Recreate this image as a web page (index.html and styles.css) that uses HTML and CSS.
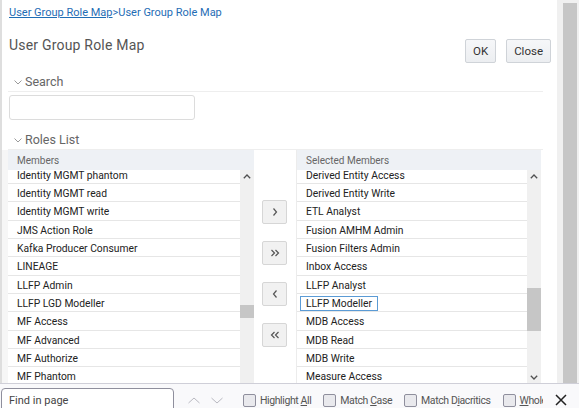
FILE: index.html
```html
<!DOCTYPE html>
<html lang="en">
<head>
    <meta charset="UTF-8">
    <meta name="viewport" content="width=device-width, initial-scale=1.0">
    <title>User Group Role Map</title>
    <link rel="stylesheet" href="styles.css">
</head>
<body>

<div class="window">
    <div class="content">
        <div class="crumbs"><a href="#">User Group Role Map</a>&gt;<span>User Group Role Map</span></div>

        <div class="header">
            <h1 class="title">User Group Role Map</h1>
            <div class="actions">
                <button class="btn">OK</button>
                <button class="btn">Close</button>
            </div>
        </div>

        <div class="section-head">
            <svg class="caret" width="8" height="5" viewBox="0 0 8 5"><polyline points="0.5,0.5 4,4 7.5,0.5"/></svg>
            Search
        </div>
        <input class="search-input" type="text">

        <div class="section-head">
            <svg class="caret" width="8" height="5" viewBox="0 0 8 5"><polyline points="0.5,0.5 4,4 7.5,0.5"/></svg>
            Roles List
        </div>

        <div class="shuttle">
            <div class="list-panel">
                <div class="list-head">Members</div>
                <div class="list-body">
                    <div class="rows">
                        <div class="row">Identity MGMT phantom</div>
                        <div class="row">Identity MGMT read</div>
                        <div class="row">Identity MGMT write</div>
                        <div class="row">JMS Action Role</div>
                        <div class="row">Kafka Producer Consumer</div>
                        <div class="row">LINEAGE</div>
                        <div class="row">LLFP Admin</div>
                        <div class="row">LLFP LGD Modeller</div>
                        <div class="row">MF Access</div>
                        <div class="row">MF Advanced</div>
                        <div class="row">MF Authorize</div>
                        <div class="row">MF Phantom</div>
                        <div class="row">MF Read</div>
                    </div>
                    <div class="vscroll">
                        <div class="arrow"><svg width="8" height="5" viewBox="0 0 8 5"><polyline points="0.8,4.2 4,1 7.2,4.2"/></svg></div>
                        <div class="thumb thumb-left"></div>
                    </div>
                </div>
            </div>

            <div class="shuttle-buttons">
                <button class="move-btn"><svg width="10" height="10" viewBox="0 0 10 10"><polyline points="3.5,1.5 6.5,5 3.5,8.5"/></svg></button>
                <button class="move-btn"><svg width="10" height="10" viewBox="0 0 10 10"><polyline points="1.5,2 4.5,5 1.5,8"/><polyline points="5.5,2 8.5,5 5.5,8"/></svg></button>
                <button class="move-btn"><svg width="10" height="10" viewBox="0 0 10 10"><polyline points="6.5,1.5 3.5,5 6.5,8.5"/></svg></button>
                <button class="move-btn"><svg width="10" height="10" viewBox="0 0 10 10"><polyline points="4.5,2 1.5,5 4.5,8"/><polyline points="8.5,2 5.5,5 8.5,8"/></svg></button>
            </div>

            <div class="list-panel">
                <div class="list-head">Selected Members</div>
                <div class="list-body">
                    <div class="rows">
                        <div class="row">Derived Entity Access</div>
                        <div class="row">Derived Entity Write</div>
                        <div class="row">ETL Analyst</div>
                        <div class="row">Fusion AMHM Admin</div>
                        <div class="row">Fusion Filters Admin</div>
                        <div class="row">Inbox Access</div>
                        <div class="row">LLFP Analyst</div>
                        <div class="row"><span class="focused">LLFP Modeller</span></div>
                        <div class="row">MDB Access</div>
                        <div class="row">MDB Read</div>
                        <div class="row">MDB Write</div>
                        <div class="row">Measure Access</div>
                        <div class="row">Measure Read</div>
                    </div>
                    <div class="vscroll">
                        <div class="arrow"><svg width="8" height="5" viewBox="0 0 8 5"><polyline points="0.8,4.2 4,1 7.2,4.2"/></svg></div>
                        <div class="thumb thumb-right"></div>
                        <div class="arrow arrow-down"><svg width="8" height="5" viewBox="0 0 8 5"><polyline points="0.8,0.8 4,4 7.2,0.8"/></svg></div>
                    </div>
                </div>
            </div>
        </div>
    </div>

    <div class="page-scroll"><div class="page-thumb"></div></div>

    <div class="findbar">
        <div class="find-input">Find in page</div>
        <svg class="find-nav" width="12" height="7" viewBox="0 0 12 7"><polyline points="0.5,6 6,1 11.5,6"/></svg>
        <svg class="find-nav" width="12" height="7" viewBox="0 0 12 7"><polyline points="0.5,1 6,6 11.5,1"/></svg>
        <label class="find-opt"><span class="box"></span><span>Highlight <u>A</u>ll</span></label>
        <label class="find-opt"><span class="box"></span><span>Match <u>C</u>ase</span></label>
        <label class="find-opt"><span class="box"></span><span>Match D<u>i</u>acritics</span></label>
        <label class="find-opt find-last"><span class="box"></span><span><u>W</u>hole Words</span></label>
        <svg class="find-close" width="12" height="12" viewBox="0 0 12 12"><path d="M1 1 L11 11 M11 1 L1 11"/></svg>
    </div>
</div>

</body>
</html>
```

FILE: styles.css
```css
body {
    margin: 0;
    font-family: Roboto, "Noto Sans", sans-serif;
    background: #fff;
}

.window {
    position: relative;
    display: flex;
    width: 579px;
    height: 408px;
    overflow: hidden;
}

.content {
    width: 555px;
    border-left: 2px solid #dedede;
}

.crumbs {
    padding: 6px 0 0 7px;
    font-size: 11px;
    line-height: 14px;
    color: #1f6db5;
}

.crumbs a {
    color: #1f6db5;
}

.header {
    display: flex;
    justify-content: space-between;
    align-items: flex-start;
    margin-top: 15px;
    padding: 0 6px 0 7px;
}

.title {
    margin: 0;
    font-size: 14px;
    line-height: 20px;
    font-weight: 400;
    letter-spacing: 0.2px;
    color: #555;
}

.actions {
    display: flex;
    gap: 10px;
    margin-top: 4px;
}

.btn {
    height: 24px;
    padding: 0 7px;
    font-family: inherit;
    font-size: 11.5px;
    color: #333;
    background: linear-gradient(#f6f7f9, #eceef1);
    border: 1px solid #cfd3d8;
    border-radius: 2px;
}

.section-head {
    display: flex;
    align-items: center;
    gap: 3px;
    height: 18px;
    margin: 10px 14px 0 6px;
    padding-left: 6px;
    font-size: 12.5px;
    line-height: 18px;
    color: #666;
    border-bottom: 1px solid #eeeeee;
}

.caret {
    fill: none;
    stroke: #9a9a9a;
    stroke-width: 1;
}

.search-input {
    display: block;
    box-sizing: border-box;
    width: 186px;
    height: 25px;
    margin: 3px 0 11px 7px;
    border: 1px solid #dcdcdc;
    border-radius: 3px;
}

.shuttle {
    display: flex;
    height: 234px;
    margin-right: 14px;
    padding-left: 6px;
    background: linear-gradient(to right, #f6f6f6 6px, #fff 6px);
}

.list-panel {
    display: flex;
    flex-direction: column;
    width: 246px;
}

.list-panel:last-child {
    width: 244px;
}

.list-head {
    height: 20px;
    padding-left: 9px;
    font-size: 10px;
    line-height: 22px;
    color: #666;
    background: #eef1f5;
}

.list-body {
    display: flex;
    flex: 1;
    overflow: hidden;
    background: #f0f0f0;
}

.rows {
    flex: 1;
    margin-top: -4.2px;
}

.row {
    box-sizing: border-box;
    height: 18.33px;
    padding: 3px 0 0 9px;
    font-size: 10.3px;
    line-height: 14px;
    color: #222;
    background: #fff;
    border-bottom: 1px solid #e6e6e6;
    white-space: nowrap;
}

.focused {
    display: inline-block;
    margin: -1px 0 0 -6px;
    padding: 0 5px;
    line-height: 13px;
    border: 1px solid #5b9bd5;
}

.vscroll {
    display: flex;
    flex-direction: column;
    width: 14px;
    background: #f0f0f0;
}

.arrow {
    display: flex;
    align-items: center;
    justify-content: center;
    height: 12px;
}

.arrow svg {
    fill: none;
    stroke: #505050;
    stroke-width: 1.3;
}

.arrow-down {
    margin-top: auto;
    height: 14px;
}

.thumb {
    background: #c6c6c6;
}

.thumb-left {
    margin-top: 123px;
    height: 13px;
}

.thumb-right {
    margin-top: 106px;
    height: 43px;
}

.shuttle-buttons {
    display: flex;
    flex-direction: column;
    gap: 17px;
    width: 43px;
    padding: 50px 0 0 8px;
    box-sizing: border-box;
    border-right: 1px solid #ececec;
}

.move-btn {
    display: flex;
    align-items: center;
    justify-content: center;
    width: 25px;
    height: 24px;
    padding: 0;
    background: #f1f1f1;
    border: 1px solid #d6d6d6;
    border-radius: 2px;
}

.move-btn svg {
    fill: none;
    stroke: #555;
    stroke-width: 1.2;
}

.page-scroll {
    width: 22px;
    padding-left: 6px;
    box-sizing: border-box;
    background: #f0f0f0;
}

.page-thumb {
    width: 14px;
    height: 100%;
    margin-top: 3px;
    background: #c6c6c6;
}

.findbar {
    position: absolute;
    left: 0;
    right: 0;
    bottom: 0;
    display: flex;
    align-items: center;
    box-sizing: border-box;
    height: 25px;
    padding-top: 8px;
    font-size: 10.5px;
    letter-spacing: -0.4px;
    color: #555;
    background: #f9f9fb;
    border-top: 1px solid #cfcfd8;
}

.find-input {
    flex: none;
    box-sizing: border-box;
    width: 173px;
    height: 26px;
    margin: -4px 14px 0 1px;
    padding: 5px 0 0 7px;
    align-self: flex-start;
    font-size: 11px;
    letter-spacing: 0;
    color: #444;
    background: #fff;
    border: 1px solid #8f8f9d;
    border-radius: 4px;
}

.find-nav {
    flex: none;
    margin-right: 11px;
    fill: none;
    stroke: #b8b8c0;
    stroke-width: 1;
}

.find-opt {
    flex: none;
    display: flex;
    align-items: center;
    gap: 4px;
    margin: 0 12px 0 9px;
    white-space: nowrap;
}

.find-opt + .find-opt {
    margin-left: 0;
}

.find-last {
    width: 40px;
    overflow: hidden;
    margin-right: 12px;
}

.box {
    flex: none;
    box-sizing: border-box;
    width: 13px;
    height: 13px;
    background: #e9e9ed;
    border: 1px solid #8f8f9d;
    border-radius: 2px;
}

.find-close {
    flex: none;
    fill: none;
    stroke: #222;
    stroke-width: 1.5;
}
```
